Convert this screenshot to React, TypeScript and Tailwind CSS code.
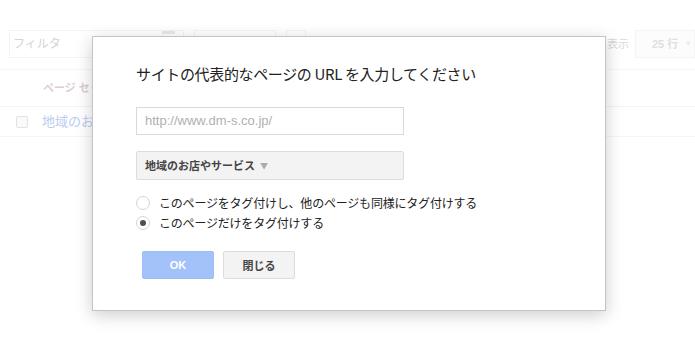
const jp = "font-['Meiryo','Noto_Sans_CJK_JP',sans-serif]";

function Background() {
  return (
    <div className="h-[356px] w-[695px] bg-white font-['Liberation_Sans','Noto_Sans_CJK_JP',sans-serif]">
      <div className="h-[30px]" />
      <div className="flex h-[28px] items-stretch">
        <div className="relative ml-[9px] flex w-[175px] items-center border border-[#f3f3f3] pl-[3px] text-[12px] text-[#d4d4d4]">
          フィルタ
          <div className="absolute right-[8px] top-0 h-[3px] w-[13px] bg-[#e8e8e8]" />
        </div>
        <div className="ml-[10px] w-[82px] border border-[#f3f3f3]" />
        <div className="ml-[10px] w-[20px] border border-[#f3f3f3]" />
        <div className="flex-1" />
        <div className="flex items-center pr-[6px] text-[11px] text-[#d8d8d8]">表示</div>
        <div className="flex w-[60px] items-center border border-[#f5f5f5] bg-[#fcfcfc] pl-[16px] text-[11px] font-bold text-[#e0e0e0]">
          25 行 <span className="ml-[6px] text-[8px] text-[#ececec]">▼</span>
        </div>
      </div>
      <div className="mt-[11px] h-px bg-[#f6f6f6]" />
      <div className="flex h-[36px] items-center pl-[43px] text-[11px] font-bold text-[#dccfcf]">ページ セット</div>
      <div className="h-px bg-[#f3f3f3]" />
      <div className="flex h-[29px] items-center">
        <div className="ml-[16px] h-[12px] w-[12px] rounded-[2px] border border-[#e2e2e2] bg-[#fafafa]" />
        <div className="ml-[14px] text-[13px] text-[#bccdf0]">地域のお店やサービス</div>
      </div>
      <div className="h-px bg-[#f6f6f6]" />
    </div>
  );
}

function Radio({ checked, label }: { checked?: boolean; label: string }) {
  return (
    <label className="flex h-[20px] items-center">
      <span className="flex h-[14px] w-[14px] items-center justify-center rounded-full border border-[#d4d4d4] bg-white">
        {checked && <span className="h-[6px] w-[6px] rounded-full bg-[#4f4f4f]" />}
      </span>
      <span className="ml-[9px] text-[12px] tracking-[-0.2px] text-[#222]">{label}</span>
    </label>
  );
}

function Dialog() {
  return (
    <div className={`absolute left-[92px] top-[36px] w-[514px] border border-[#c4c4c4] bg-white pb-[31px] pl-[43px] pt-[27px] shadow-[0_4px_16px_rgba(0,0,0,0.2)] ${jp}`}>
      <div className="text-[15px] leading-5 tracking-[-0.35px] text-[#222]">
        サイトの代表的なページの URL を入力してください
      </div>
      <div className="mt-[23px] flex h-[28px] w-[268px] items-center border border-[#d9d9d9] pl-[8px] font-['Liberation_Sans',sans-serif] text-[13px] text-[#b0b0b0]">
        http://www.dm-s.co.jp/
      </div>
      <div className="mt-[16px] flex h-[29px] w-[268px] items-center rounded-[2px] border border-[#dcdcdc] bg-[#f3f3f3] pl-[8px] text-[11px] font-bold text-[#444]">
        地域のお店やサービス
        <span className="ml-[5px] text-[8px] font-normal text-[#aaa]">▼</span>
      </div>
      <div className="mt-[13px] flex flex-col">
        <Radio label="このページをタグ付けし、他のページも同様にタグ付けする" />
        <Radio checked label="このページだけをタグ付けする" />
      </div>
      <div className="ml-[6px] mt-[18px] flex gap-[9px]">
        <div className="flex h-[28px] w-[72px] items-center justify-center rounded-[2px] border border-[#9dbdf6] bg-[#a4c2fa] font-['Liberation_Sans',sans-serif] text-[11px] font-bold text-white">
          OK
        </div>
        <div className="flex h-[28px] w-[72px] items-center justify-center rounded-[2px] border border-[#dcdcdc] bg-[#f3f3f3] text-[11px] font-bold text-[#444]">
          閉じる
        </div>
      </div>
    </div>
  );
}

export default function App() {
  return (
    <div className="relative h-[356px] w-[695px] overflow-hidden">
      <Background />
      <Dialog />
    </div>
  );
}
